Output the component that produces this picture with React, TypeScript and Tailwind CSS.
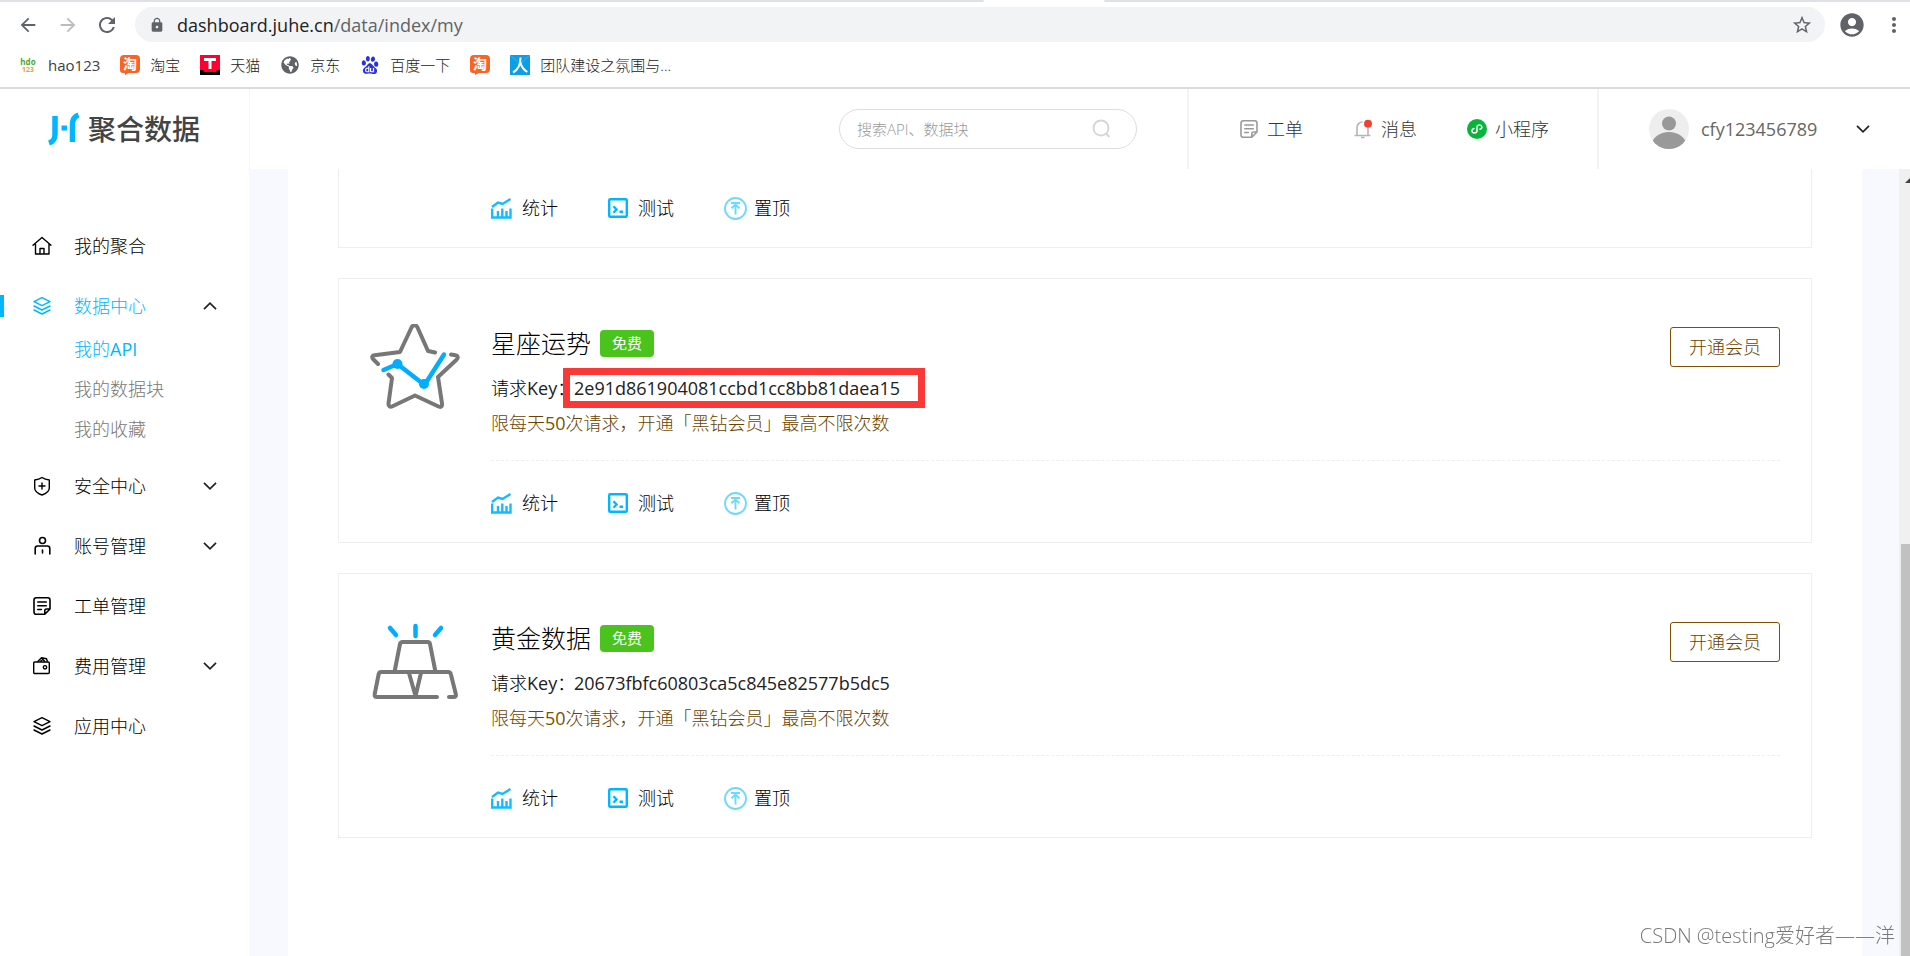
import { useState } from 'react';
import type { ReactNode } from 'react';
import { FaGlobeAmericas } from 'react-icons/fa';
import { MdAccountCircle, MdArrowBack, MdArrowForward, MdLock, MdMoreVert, MdRefresh, MdStarBorder } from 'react-icons/md';
import { SiBaidu } from 'react-icons/si';

type MenuItem = {
  id: string;
  label: string;
  icon: ReactNode;
  expandable?: boolean;
  children?: ReactNode[];
};

type Api = {
  id: string;
  name: string;
  requestKey: string;
  icon: ReactNode;
  marked?: boolean;
};

function HomeIcon() {
  return (
    <svg viewBox="0 0 20 20" className="size-5" fill="none" stroke="currentColor" strokeWidth="1.4" strokeLinejoin="round" strokeLinecap="round">
      <path d="M1 9.2 10 1.5l9 7.7M3.5 8v10h13.500V8M8 18v-5.500h4V18" />
    </svg>
  );
}

function LayersIcon() {
  return (
    <svg viewBox="0 0 20 20" className="size-5" fill="none" stroke="currentColor" strokeWidth="1.4" strokeLinejoin="round" strokeLinecap="round">
      <path d="m10 1.700 8 4-8 4-8-4zM2 10l8 4 8-4M2 14l8 4 8-4" />
    </svg>
  );
}

function ShieldIcon() {
  return (
    <svg viewBox="0 0 20 20" className="size-5" fill="none" stroke="currentColor" strokeWidth="1.4" strokeLinejoin="round" strokeLinecap="round">
      <path d="M10 1.500c2 1.500 4.500 2.300 7.300 2.500v8c0 3.500-3 5.500-7.300 7-4.300-1.500-7.300-3.500-7.300-7V4C5.500 3.800 8 3 10 1.500zM10 7v6M7 10h6" />
    </svg>
  );
}

function UserIcon() {
  return (
    <svg viewBox="0 0 20 20" className="size-5" fill="none" stroke="currentColor" strokeWidth="1.600" strokeLinecap="round">
      <circle cx="10.500" cy="4.500" r="3" />
      <path d="M3.200 18v-5.500c0-2 1-2.500 2.500-2.500h9.600c1.500 0 2.500.5 2.500 2.500V18M10.500 14v3" />
    </svg>
  );
}

function NoteIcon() {
  return (
    <svg viewBox="0 0 20 20" className="size-5" fill="none" stroke="currentColor" strokeWidth="1.600" strokeLinejoin="round" strokeLinecap="round">
      <path d="M18 13V4c0-1.500-.8-2.300-2.300-2.300H4.300C2.800 1.700 2 2.500 2 4v12c0 1.500.8 2.300 2.300 2.300h8.500zM18 13h-3.500c-1 0-1.700.6-1.700 1.700v3.600M5.800 6h8.500M5.800 9.800h8.500M5.800 13.500h3.500" />
    </svg>
  );
}

function WalletIcon() {
  return (
    <svg viewBox="0 0 20 20" className="size-5" fill="none" stroke="currentColor" strokeWidth="1.400" strokeLinejoin="round">
      <rect x="1.700" y="6" width="15.600" height="11.500" rx="1" />
      <path d="m5.500 5.800 4-4 3.500 4M9.500 1.800l5 1 1 3M8 5.500l3-2" />
      <circle cx="13" cy="11.300" r="1.700" />
    </svg>
  );
}

function Chevron({ up = false }: { up?: boolean }) {
  return (
    <svg viewBox="0 0 14 8" className="h-2 w-[14px] text-[#222]" fill="none" stroke="currentColor" strokeWidth="1.700">
      <path d={up ? 'M1 7.200 7 1.200l6 6' : 'M1 .8l6 6 6-6'} />
    </svg>
  );
}

function StatsIcon() {
  return (
    <svg viewBox="0 0 21 21" className="size-[21px]" fill="none" stroke="#14bcff" strokeWidth="2.400">
      <path d="M1 9 7 4.500l4.500 1.500L19.500 1M1.200 10.500v9h18.300v-9M7 13v6M11.300 10.500V19M15.500 13v6" />
    </svg>
  );
}

function ConsoleIcon() {
  return (
    <svg viewBox="0 0 20 20" className="size-5" fill="none" stroke="#00b7ff" strokeWidth="2.400">
      <rect x="1.200" y="1.200" width="17.600" height="17.600" rx="1" />
      <path d="m5.500 8.300 3 3.200-3 3.200M11.500 13.700h3.500" />
    </svg>
  );
}

function PinTopIcon() {
  return (
    <svg viewBox="0 0 23 23" className="size-[23px]" fill="none" stroke="#6ed8ff" strokeWidth="1.900">
      <circle cx="11.500" cy="11.500" r="10.500" />
      <path d="M7 6h9M11.500 17.500V7.500M7.500 11.200l4-3.700 4 3.700" />
    </svg>
  );
}

function StarArt() {
  return (
    <svg viewBox="0 0 90 90" className="size-[90px]" fill="none" strokeLinecap="round" strokeLinejoin="round">
      <g stroke="#777" strokeWidth="4">
        <path d="M8 40 3.500 35.500c-2-2-1.500-4 1-4.300L30 28l11.500-24.500c1.500-3 4.500-3 6 0L58 27l7 1.500M81 30.500l4.500.7c2.500.4 3 2.500 1 4.500L68 53l4 26.500c.4 3-1.300 4.200-4 2.800L45 71.500 22.500 82.300c-2.500 1.300-4.200 0-4-2.800L22 54l-3.500-3.500" />
      </g>
      <path d="m13.500 46 14-6 27 21L74 30.500" stroke="#00adff" strokeWidth="4.500" />
      <circle cx="27.500" cy="40" r="5" fill="#00adff" />
      <circle cx="54" cy="60" r="5" fill="#00adff" />
    </svg>
  );
}

function GoldArt() {
  return (
    <svg viewBox="0 -4 90 90" className="size-[90px]" fill="none" strokeLinecap="round" strokeLinejoin="round">
      <path d="m20 5 6 7M45.500 3v10M71 5l-6 7" stroke="#00adff" strokeWidth="4.500" />
      <path
        d="m24.500 49 5.500-28c.4-1.600 1-2 2.500-2h25c1.500 0 2.200.4 2.500 2l5.500 28M67 74H7c-2 0-2.700-1-2.300-3l4-20c.4-1.500 1-2 2.500-2h67c1.600 0 2.300.5 2.600 2l5 20c.5 2-.2 3-2.300 3H79M39 50l6.500 23L51 50"
        stroke="#777"
        strokeWidth="4"
      />
    </svg>
  );
}

function TaobaoIcon() {
  return (
    <svg viewBox="0 0 20 20" className="size-5 overflow-visible">
      <path d="M4 0h12a4 4 0 0 1 4 4v10a4 4 0 0 1-4 4H9l-4 2v-2H3a3 3 0 0 1-3-3V4a4 4 0 0 1 4-4z" fill="#fb6322" />
      <text x="10" y="14" textAnchor="middle" fontSize="14" fontWeight="700" fill="#fff" fontFamily="'Noto Sans CJK SC', sans-serif">淘</text>
    </svg>
  );
}

function Hao123Icon() {
  return (
    <svg viewBox="0 0 18 18" className="size-[18px] overflow-visible" fontFamily="'Open Sans', sans-serif" fontWeight="700" textAnchor="middle">
      <text x="9" y="9" fontSize="8" fill="#4ca52e">hdo</text>
      <text x="9" y="16" fontSize="7" fill="#f59a3c">123</text>
    </svg>
  );
}

function TmallIcon() {
  return (
    <svg viewBox="0 0 20 20" className="size-5">
      <path d="M0 0h20v20H0z" fill="#000" />
      <path d="M0 0h20v15h-3l-1 2H4l-1-2H0z" fill="#ff0030" />
      <path d="M4 3h12v3h-4.500v8h-3V6H4z" fill="#fff" />
    </svg>
  );
}

function RenIcon() {
  return (
    <svg viewBox="0 0 20 20" className="size-5">
      <path d="M0 0h20v20H0z" fill="#0c9ee8" />
      <path d="M10.500 2.500C10.500 9 8 15 3 17.500M10.300 7c1 4.500 3.500 8 7 10" fill="none" stroke="#fff" strokeWidth="2" />
      <path d="m0 0 8 7M20 0l-8 7" stroke="#4bbcf3" strokeWidth=".7" />
    </svg>
  );
}

function Logo() {
  return (
    <a href="#" className="flex items-center gap-2 text-[28px] leading-10 font-medium text-[#444]">
      <svg viewBox="0 0 32 34" className="h-[34px] w-8" fill="none" stroke="#00b7ff" strokeWidth="5.500">
        <path d="M7 4v18c0 5-1.500 7.500-6 9M24.500 30V12c0-5 2-7.500 6-9" />
        <path d="M13.500 16h5.500" strokeWidth="5" />
      </svg>
      聚合数据
    </a>
  );
}

const bookmarks = [
  { id: 'hao123', label: 'hao123', icon: <Hao123Icon /> },
  { id: 'taobao', label: '淘宝', icon: <TaobaoIcon /> },
  { id: 'tmall', label: '天猫', icon: <TmallIcon /> },
  { id: 'jd', label: '京东', icon: <FaGlobeAmericas className="size-[18px] text-[#5f6368]" /> },
  { id: 'baidu', label: '百度一下', icon: <SiBaidu className="size-[18px] text-[#2932e1]" /> },
  { id: 'taobao2', label: '', icon: <TaobaoIcon /> },
  { id: 'team', label: '团队建设之氛围与...', icon: <RenIcon /> },
];

const menu: MenuItem[] = [
  { id: 'home', label: '我的聚合', icon: <HomeIcon /> },
  {
    id: 'data',
    label: '数据中心',
    icon: <LayersIcon />,
    expandable: true,
    children: [<>我的<span className="font-normal">API</span></>, '我的数据块', '我的收藏'],
  },
  { id: 'security', label: '安全中心', icon: <ShieldIcon />, expandable: true },
  { id: 'account', label: '账号管理', icon: <UserIcon />, expandable: true },
  { id: 'ticket', label: '工单管理', icon: <NoteIcon /> },
  { id: 'billing', label: '费用管理', icon: <WalletIcon />, expandable: true },
  { id: 'apps', label: '应用中心', icon: <LayersIcon /> },
];

const apis: Api[] = [
  { id: 'star', name: '星座运势', requestKey: '2e91d861904081ccbd1cc8bb81daea15', icon: <StarArt />, marked: true },
  { id: 'gold', name: '黄金数据', requestKey: '20673fbfc60803ca5c845e82577b5dc5', icon: <GoldArt /> },
];

function BrowserBar() {
  return (
    <div className="shrink-0 border-b-2 border-[#dadbe0]">
      <div className="flex h-[2px] justify-between">
        <div className="w-[984px] rounded-br-sm bg-[#dee1e6]" />
        <div className="w-[806px] rounded-bl-sm bg-[#dee1e6]" />
      </div>
      <div className="flex h-[45px] items-center pr-1 pl-[17px] text-[#5f6368]">
        <button aria-label="Back"><MdArrowBack className="size-[22px]" /></button>
        <button aria-label="Forward" className="ml-[18px] text-[#babcbe]"><MdArrowForward className="size-[22px]" /></button>
        <button aria-label="Reload" className="ml-4"><MdRefresh className="size-6" /></button>
        <div className="ml-4 flex h-[35px] flex-1 items-center rounded-full bg-[#f1f3f4] pr-3 pl-[14px]">
          <MdLock className="size-4" />
          <span className="ml-3 flex-1 text-[18px] leading-6 font-normal">
            <span className="text-[#202124]">dashboard.juhe.cn</span>/data/index/my
          </span>
          <button aria-label="Bookmark"><MdStarBorder className="size-[22px]" /></button>
        </div>
        <button aria-label="Profile" className="ml-[13px]"><MdAccountCircle className="size-7" /></button>
        <button aria-label="Menu" className="ml-4"><MdMoreVert className="size-6" /></button>
      </div>
      <nav className="flex h-10 items-start gap-5 pt-2 pl-[18px] text-[15px] leading-5 text-[#222]">
        {bookmarks.map((b) => (
          <a key={b.id} href="#" aria-label={b.label || 'Taobao'} className="flex items-center gap-[10px]">
            <span className="flex w-5 justify-center">{b.icon}</span>
            {b.label && <span className={b.id === 'hao123' ? 'font-normal text-[#3c4043]' : ''}>{b.label}</span>}
          </a>
        ))}
      </nav>
    </div>
  );
}

function Header() {
  return (
    <header className="flex h-20 shrink-0 bg-white text-[18px] text-[#333]">
      <div className="flex w-[250px] items-center border-r border-[#f5f5f5] pl-12">
        <Logo />
      </div>
      <div className="flex flex-1 items-center justify-end pr-[50px]">
        <label className="flex h-10 w-[298px] items-center rounded-full border border-[#ddd] pr-6 pl-[17px]">
          <input type="text" aria-label="搜索" placeholder="搜索API、数据块" className="min-w-0 flex-1 text-[15px] outline-none placeholder:text-[#999]" />
          <svg viewBox="0 0 20 20" className="size-5" fill="none" stroke="#d4d4d4" strokeWidth="1.800">
            <circle cx="9" cy="9" r="7.500" />
            <path d="m14 14.500 3.500 3.500" />
          </svg>
        </label>
      </div>
      <nav className="flex items-center gap-[50px] border-x-2 border-[#f3f3f3] pr-[48px] pl-[50px]">
        <a href="#" className="flex items-center gap-2">
          <span className="text-[#999]"><NoteIcon /></span>
          工单
        </a>
        <a href="#" className="flex items-center gap-2">
          <svg viewBox="0 0 20 20" className="size-5" fill="none" stroke="#b5b5b5" strokeWidth="1.600">
            <path d="M4 16V8.500A5.500 5.500 0 0 1 9.500 3M15 9v7M1.500 16.500h16M8 18.500h3.500" />
            <circle cx="15" cy="4.800" r="4" fill="#f04134" stroke="none" />
          </svg>
          消息
        </a>
        <a href="#" className="flex items-center gap-2">
          <svg viewBox="0 0 20 20" className="size-5" fill="none" stroke="#fff" strokeWidth="1.500" strokeLinecap="round">
            <circle cx="10" cy="10" r="10" fill="#07b53b" stroke="none" />
            <path d="M7 9.500c-3 .8-2.500 4.500.3 4.500 1.700 0 2.700-1 2.700-2.500V8.200C10 6.800 11 6 12.500 6c2.800 0 3.300 3.500.5 4.300" />
          </svg>
          小程序
        </a>
      </nav>
      <div className="flex w-[311px] items-center gap-3 pr-10 pl-[50px]">
        <svg viewBox="0 0 40 40" className="size-10">
          <clipPath id="avatar"><circle cx="20" cy="20" r="20" /></clipPath>
          <g clipPath="url(#avatar)">
            <path d="M0 0h40v40H0z" fill="#eee" />
            <circle cx="20" cy="14.500" r="7" fill="#999" />
            <ellipse cx="20" cy="36" rx="17" ry="13" fill="#999" />
          </g>
        </svg>
        <span className="flex-1 font-normal text-[#666]">cfy123456789</span>
        <button aria-label="展开"><Chevron /></button>
      </div>
    </header>
  );
}

function Sidebar() {
  const [openId, setOpenId] = useState('data');

  return (
    <aside className="w-[249px] shrink-0 bg-white pt-[47px] text-[18px] text-black">
      {menu.map((item) => {
        const open = item.id === openId && !!item.children;
        return (
          <div key={item.id}>
            <button
              onClick={() => item.expandable && setOpenId(open ? '' : item.id)}
              className={`flex w-full items-center ${open ? 'h-[53px] pt-[7px] text-[#00b7ff]' : 'h-[60px]'}`}
            >
              <span className={`h-[22px] w-1 ${open ? 'bg-[#00b7ff]' : ''}`} />
              <span className="ml-7">{item.icon}</span>
              <span className="ml-[22px] flex-1 text-left">{item.label}</span>
              {item.expandable && <span className="mr-8"><Chevron up={open} /></span>}
            </button>
            {open && (
              <div className="pb-[7px]">
                {item.children?.map((child, i) => (
                  <a key={i} href="#" className={`flex h-10 items-center pl-[74px] ${i === 0 ? 'text-[#00b7ff]' : 'text-[#777]'}`}>
                    {child}
                  </a>
                ))}
              </div>
            )}
          </div>
        );
      })}
    </aside>
  );
}

function CardActions() {
  return (
    <div className="flex items-center gap-[50px] pt-[30px] pb-[27px] text-[18px] leading-6 text-black">
      <button className="flex items-center gap-[10px]"><StatsIcon />统计</button>
      <button className="flex items-center gap-[10px]"><ConsoleIcon />测试</button>
      <button className="flex items-center gap-[7px]"><PinTopIcon />置顶</button>
    </div>
  );
}

function ApiCard({ api }: { api: Api }) {
  return (
    <section className="flex border border-[#eee] px-[31px]">
      <div className="w-[121px] shrink-0 pt-[45px]">{api.icon}</div>
      <div className="flex-1">
        <div className="flex justify-between border-b border-dashed border-[#eee] pt-[46px] pb-[22px]">
          <div>
            <div className="flex h-9 items-center gap-[9px]">
              <h2 className="text-[25px] leading-9 text-black">{api.name}</h2>
              <span className="rounded bg-[#4ac41c] px-3 text-[15px] leading-[27px] font-normal text-white">免费</span>
            </div>
            <div className="relative mt-[7px] flex h-10 items-center text-[18px] text-black">
              <span className="w-[83px] whitespace-nowrap">请求<span className="font-normal text-[#222]">Key</span>：</span>
              <span className="font-normal text-[#222]">{api.requestKey}</span>
              {api.marked && <span className="absolute top-0 left-[72px] h-10 w-[362px] border-[7px] border-[#fb3838]" />}
            </div>
            <p className="text-[18px] leading-[30px] text-[#6b4300]">
              限每天<span className="font-normal text-[#7d4f00]">50</span>次请求，开通「黑钻会员」最高不限次数
            </p>
          </div>
          <button className="mt-[2px] h-10 w-[110px] rounded-[3px] border border-[#7d4f00] text-[18px] text-[#6b4300]">开通会员</button>
        </div>
        <CardActions />
      </div>
    </section>
  );
}

export default function App() {
  return (
    <div className="flex h-screen flex-col overflow-hidden bg-white font-['Open_Sans','Noto_Sans_CJK_SC',sans-serif] font-light">
      <BrowserBar />
      <Header />
      <div className="flex min-h-0 flex-1">
        <Sidebar />
        <main className="min-w-0 flex-1 overflow-hidden bg-[#f8f9ff] pr-[37px] pl-[39px]">
          <div className="flex h-full flex-col gap-[30px] bg-white px-[50px]">
            <section className="-mt-[3px] border border-t-0 border-[#eee] pl-[152px]">
              <CardActions />
            </section>
            {apis.map((api) => (
              <ApiCard key={api.id} api={api} />
            ))}
          </div>
        </main>
        <div className="flex w-[11px] shrink-0 flex-col justify-between overflow-hidden bg-[#f0f0f0] pl-[2px]">
          <svg viewBox="0 0 9 5" className="mt-[9px] h-[5px] w-[9px]"><path d="M9 0v5H4z" fill="#444" /></svg>
          <div className="h-[412px] bg-[#c1c1c1]" />
        </div>
      </div>
      <div className="fixed right-[15px] bottom-1 text-[20px] leading-8 text-[#777]">CSDN @testing爱好者——洋</div>
    </div>
  );
}
